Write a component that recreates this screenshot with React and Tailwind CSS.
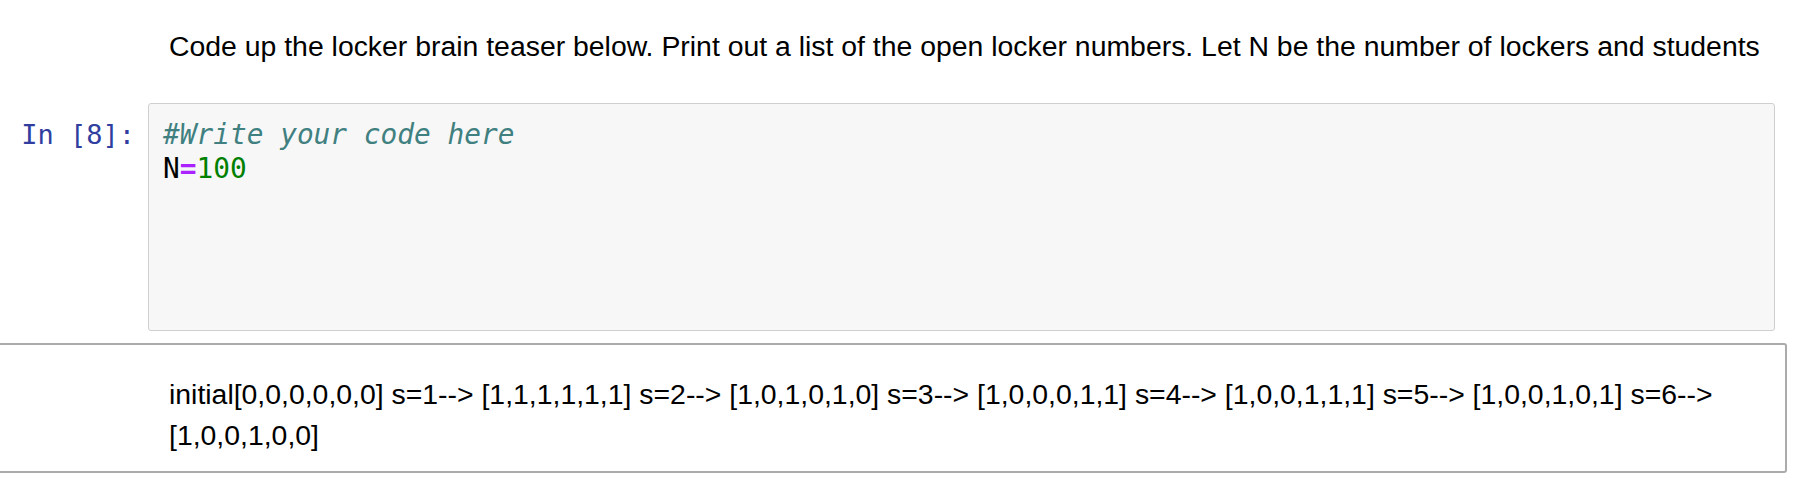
export default function App() {
  const mono = { fontFamily: '"DejaVu Sans Mono", "Liberation Mono", monospace' };
  const sans = { fontFamily: '"Liberation Sans", Arial, sans-serif' };
  return (
    <div className="w-[1810px] h-[482px] bg-white overflow-hidden relative">
      <div className="pl-[169px] pt-[29px] h-[103px]">
        <p className="text-[28.4px] leading-[34px] text-black whitespace-nowrap" style={sans}>
          Code up the locker brain teaser below. Print out a list of the open locker numbers. Let N be the number of lockers and students
        </p>
      </div>
      <div className="flex">
        <div className="w-[148px] shrink-0 pr-[13px] pt-[15px] text-right text-[27px] leading-[34px] text-[#303F9F]" style={mono}>
          In [8]:
        </div>
        <div className="w-[1627px] h-[228px] bg-[#f7f7f7] border border-[#cfcfcf] rounded-[3px] pl-[14px] pt-[14px] text-[27.8px] leading-[34px]" style={mono}>
          <div className="italic text-[#408080]">#Write your code here</div>
          <div>
            <span className="text-black">N</span>
            <span className="text-[#AA22FF] font-bold">=</span>
            <span className="text-[#008000]">100</span>
          </div>
        </div>
      </div>
      <div className="mt-[12px] ml-[-10px] w-[1797px] h-[130px] border-2 border-[#ababab] rounded-[3px] pl-[177px] pt-[29px]">
        <p className="text-[28.4px] leading-[41px] text-black pr-[20px]" style={sans}>
          initial[0,0,0,0,0,0] s=1--&gt; [1,1,1,1,1,1] s=2--&gt; [1,0,1,0,1,0] s=3--&gt; [1,0,0,0,1,1] s=4--&gt; [1,0,0,1,1,1] s=5--&gt; [1,0,0,1,0,1] s=6--&gt; [1,0,0,1,0,0]
        </p>
      </div>
    </div>
  );
}
